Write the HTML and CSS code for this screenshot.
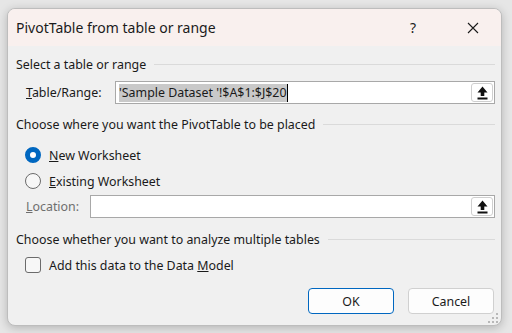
FILE: index.html
```html
<!DOCTYPE html>
<html>
<head>
<meta charset="utf-8">
<link rel="stylesheet" href="styles.css">
</head>
<body>
<div class="dialog">
  <div class="titlebar">
    <span class="title">PivotTable from table or range</span>
    <span class="help">?</span>
    <svg class="close" width="12" height="12" viewBox="0 0 12 12"><path d="M1 1L11 11M11 1L1 11" stroke="#1b1b1b" stroke-width="1.1" fill="none"/></svg>
  </div>
  <div class="content">
    <div class="section s1"><span>Select a table or range</span><div class="rule"></div></div>
    <div class="field f1">
      <span class="label"><u>T</u>able/Range:</span>
      <div class="input wide1">
        <span class="sel">'Sample Dataset '!$A$1:$J$20</span><span class="caret"></span>
        <div class="pick"><svg width="11" height="14" viewBox="0 0 11 14"><path d="M5.5 0.5L10.5 6.5H7.3V10H3.7V6.5H0.5Z" fill="#111"/><rect x="0.5" y="11.5" width="10" height="2" fill="#111"/></svg></div>
      </div>
    </div>
    <div class="section s2"><span>Choose where you want the PivotTable to be placed</span><div class="rule"></div></div>
    <div class="option o1"><span class="radio on"></span><span><u>N</u>ew Worksheet</span></div>
    <div class="option o2"><span class="radio"></span><span><u>E</u>xisting Worksheet</span></div>
    <div class="field f2">
      <span class="label dis"><u>L</u>ocation:</span>
      <div class="input">
        <div class="pick"><svg width="11" height="14" viewBox="0 0 11 14"><path d="M5.5 0.5L10.5 6.5H7.3V10H3.7V6.5H0.5Z" fill="#111"/><rect x="0.5" y="11.5" width="10" height="2" fill="#111"/></svg></div>
      </div>
    </div>
    <div class="section s3"><span>Choose whether you want to analyze multiple tables</span><div class="rule"></div></div>
    <div class="option o3"><span class="check"></span><span>Add this data to the Data <u>M</u>odel</span></div>
    <div class="buttons">
      <button class="btn primary">OK</button>
      <button class="btn">Cancel</button>
    </div>
  </div>
  <div class="grip">
    <i style="right:3px;bottom:10px"></i>
    <i style="right:3px;bottom:6px"></i><i style="right:7px;bottom:6px"></i>
    <i style="right:3px;bottom:2px"></i><i style="right:7px;bottom:2px"></i><i style="right:11px;bottom:2px"></i>
  </div>
</div>
</body>
</html>
```
FILE: styles.css
```css
html, body { margin: 0; padding: 0; }
body {
  width: 512px; height: 333px; overflow: hidden;
  background: #e6e6e6;
  font-family: "Noto Sans", "Open Sans", sans-serif;
  font-size: 12.4px;
  color: #1a1a1a;
}
.dialog {
  position: relative;
  box-sizing: border-box;
  margin: 8px 0 0 7px;
  width: 495px; height: 318px;
  background: #f0f0f0;
  border: 1px solid #bdbdbd;
  border-radius: 8px;
  box-shadow: 0 2px 10px rgba(0,0,0,0.22);
  overflow: hidden;
}
.titlebar {
  height: 37px;
  background: #f9f0ee;
  display: flex; align-items: center;
  padding-left: 8px;
}
.title { font-size: 14px; color: #1b1b1b; flex: 1; }
.help { font-size: 14px; width: 10px; margin-right: 47px; color: #1b1b1b; }
.close { margin-right: 22px; }
.content { padding: 0 6px 0 8px; display: flex; flex-direction: column; }
.section { display: flex; align-items: center; height: 20px; }
.section .rule { flex: 1; height: 1px; background: #dadada; margin-left: 8px; }
.s1 { margin-top: 8px; }
.s2 { margin-top: 10px; }
.s3 { margin-top: 11px; }
.field { display: flex; align-items: center; height: 23px; padding-left: 10px; }
.f1 { margin-top: 7px; }
.f2 { margin-top: 4px; }
.label { width: 89px; }
.f2 .label { width: 64px; }
.dis { color: #6e6e6e; }
.input {
  flex: 1; height: 23px; box-sizing: border-box;
  background: #fff; border: 1px solid #a8a8a8;
  display: flex; align-items: center; position: relative;
  padding-left: 3px;
}
.sel { background: #c9c9c9; height: 18px; line-height: 18px; }
.caret { width: 1px; height: 18px; background: #000; }
.pick {
  position: absolute; right: 1px; top: 1px;
  width: 22px; height: 19px; box-sizing: border-box;
  border: 1px solid #cfcfcf; border-radius: 3px; background: #fff;
  display: flex; align-items: center; justify-content: center;
}
.option { display: flex; align-items: center; height: 20px; padding-left: 9px; gap: 8px; }
.o1 { margin-top: 11px; }
.o2 { margin-top: 6px; }
.o3 { margin-top: 6px; }
.radio {
  width: 16px; height: 16px; box-sizing: border-box; border-radius: 50%;
  border: 1px solid #6b6b6b; background: #f7f7f7;
}
.radio.on { border: 5px solid #0067c0; background: #fff; }
.check {
  width: 16px; height: 16px; box-sizing: border-box; border-radius: 3px;
  border: 1px solid #6b6b6b; background: #f7f7f7;
}
.buttons { display: flex; justify-content: flex-end; gap: 14px; margin-top: 13px; padding-right: 1px; }
.btn {
  width: 86px; height: 26px; box-sizing: border-box;
  font-family: inherit; font-size: 12.4px; color: #1a1a1a;
  background: #fdfdfd; border: 1px solid #d0d0d0; border-radius: 4px;
  padding: 0;
}
.btn.primary { border-color: #0067c0; }
.grip { position: absolute; right: 0; bottom: 0; width: 16px; height: 14px; }
.grip i { position: absolute; width: 2px; height: 2px; background: #b8b8b8; }
```
